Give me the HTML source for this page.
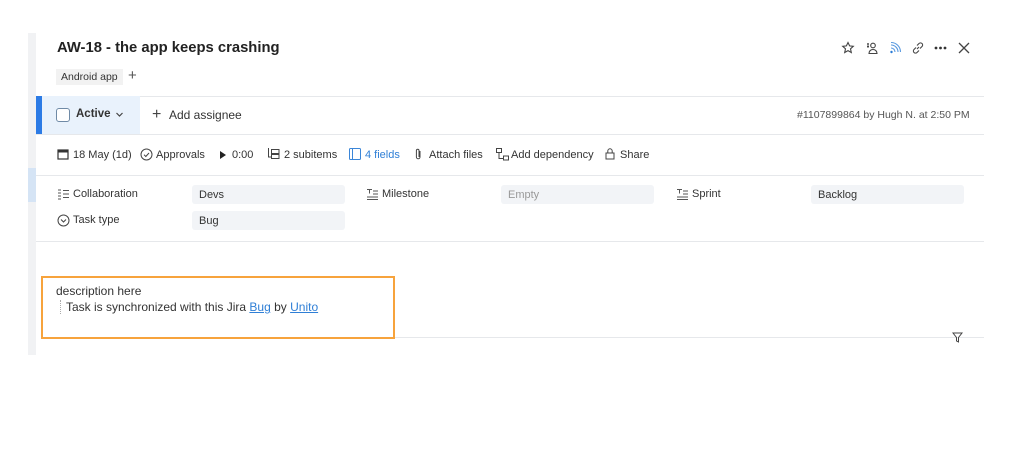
<!DOCTYPE html>
<html><head><meta charset="utf-8"><style>
body{margin:0;width:1024px;height:458px;background:#fff;font-family:"Liberation Sans",sans-serif;color:#333;position:relative;overflow:hidden}
.a{position:absolute;white-space:nowrap}
.ln{position:absolute;height:1px;background:#e6e8eb}
.pill{position:absolute;height:19px;background:#f2f4f7;border-radius:3px;font-size:11px;line-height:20px;padding-left:7px;box-sizing:border-box;color:#333}
.t{font-size:11px;color:#333}
svg{position:absolute}
</style></head><body>
<div class="a" style="left:28px;top:33px;width:8px;height:322px;background:#f1f2f4"></div>
<div class="a" style="left:28px;top:168px;width:8px;height:34px;background:#d5e4f5"></div>

<div class="a" style="left:57px;top:40px;font-size:14.8px;font-weight:bold;color:#222">AW-18 - the app keeps crashing</div>
<div class="a" style="left:56px;top:69px;height:16px;line-height:16px;padding:0 5px;background:#f2f2f2;font-size:10.5px;color:#333">Android app</div>
<div class="a" style="left:128px;top:67px;font-size:15px;color:#555">+</div>

<svg style="left:841px;top:41px" width="14" height="14" viewBox="0 0 14 14"><path d="M7 1.5l1.6 3.4 3.7.4-2.8 2.5.8 3.7L7 9.6l-3.3 1.9.8-3.7L1.7 5.3l3.7-.4z" fill="none" stroke="#444" stroke-width="1.1"/></svg>
<svg style="left:865px;top:41px" width="14" height="14" viewBox="0 0 14 14"><circle cx="8" cy="4.5" r="2.3" fill="none" stroke="#444" stroke-width="1.1"/><path d="M4 12.5c0-2.5 1.8-4 4-4s4 1.5 4 4z" fill="none" stroke="#444" stroke-width="1.1"/><path d="M2 3h2M2 5.5h2M3 2v5" stroke="#444" stroke-width="0.9"/></svg>
<svg style="left:888px;top:41px" width="14" height="14" viewBox="0 0 14 14"><circle cx="3.5" cy="11" r="1.2" fill="#2a7bd5"/><path d="M3 7a4 4 0 0 1 4 4M3 4a7 7 0 0 1 7 7M3 1.5a9.5 9.5 0 0 1 9.5 9.5" fill="none" stroke="#5a9ae0" stroke-width="1.1"/></svg>
<svg style="left:911px;top:41px" width="14" height="14" viewBox="0 0 14 14"><path d="M6 8l2-2M5 6.5l-2 2a2 2 0 0 0 3 3l2-2M9 7.5l2-2a2 2 0 0 0-3-3l-2 2" fill="none" stroke="#444" stroke-width="1.1"/></svg>
<svg style="left:934px;top:46px" width="13" height="4" viewBox="0 0 13 4"><circle cx="2" cy="2" r="1.4" fill="#333"/><circle cx="6.5" cy="2" r="1.4" fill="#333"/><circle cx="11" cy="2" r="1.4" fill="#333"/></svg>
<svg style="left:958px;top:42px" width="12" height="12" viewBox="0 0 12 12"><path d="M1 1l10 10M11 1L1 11" stroke="#444" stroke-width="1.3"/></svg>

<div class="ln" style="left:36px;top:96px;width:948px"></div>
<div class="a" style="left:36px;top:96px;width:104px;height:38px;background:#e9f2fc"></div>
<div class="a" style="left:36px;top:96px;width:6px;height:38px;background:#2c7be5"></div>
<div class="a" style="left:56px;top:108px;width:12px;height:12px;border:1.3px solid #6f8aa6;border-radius:3px;background:#fff"></div>
<div class="a" style="left:76px;top:108px;font-size:11.5px;font-weight:bold;color:#333">Active</div>
<svg style="left:115px;top:111px" width="9" height="7" viewBox="0 0 9 7"><path d="M1.5 2l3 3 3-3" fill="none" stroke="#444" stroke-width="1.2"/></svg>
<div class="a" style="left:152px;top:106px;font-size:16px;color:#444">+</div>
<div class="a" style="left:169px;top:108px;font-size:12px;color:#333">Add assignee</div>
<div class="a" style="left:797px;top:109px;font-size:10.5px;color:#555">#1107899864 by Hugh N. at 2:50 PM</div>
<div class="ln" style="left:36px;top:134px;width:948px"></div>

<svg style="left:57px;top:148px" width="12" height="12" viewBox="0 0 12 12"><rect x="1" y="2" width="10" height="9" fill="none" stroke="#333" stroke-width="1.2"/><rect x="1" y="2" width="10" height="2.5" fill="#333"/></svg>
<div class="a t" style="left:73px;top:149px">18 May (1d)</div>
<svg style="left:140px;top:148px" width="13" height="13" viewBox="0 0 13 13"><circle cx="6.5" cy="6.5" r="5.5" fill="none" stroke="#444" stroke-width="1"/><path d="M4 6.7l1.8 1.8L9 5" fill="none" stroke="#444" stroke-width="1"/></svg>
<div class="a t" style="left:156px;top:149px">Approvals</div>
<svg style="left:219px;top:151px" width="8" height="8" viewBox="0 0 8 8"><path d="M1 0l6 4-6 4z" fill="#222"/></svg>
<div class="a t" style="left:232px;top:149px">0:00</div>
<svg style="left:267px;top:148px" width="13" height="12" viewBox="0 0 13 12"><path d="M1.5 0v9h3" fill="none" stroke="#444"/><rect x="4.5" y="1.5" width="7.5" height="4" fill="none" stroke="#444"/><rect x="4.5" y="6.5" width="7.5" height="4" fill="none" stroke="#444"/></svg>
<div class="a t" style="left:284px;top:149px">2 subitems</div>
<svg style="left:349px;top:148px" width="12" height="12" viewBox="0 0 12 12"><rect x="0.5" y="0.5" width="11" height="11" rx="1" fill="none" stroke="#3b86d8"/><path d="M3.5 1v10" stroke="#3b86d8"/></svg>
<div class="a t" style="left:365px;top:149px;color:#2f7fd6">4 fields</div>
<svg style="left:414px;top:148px" width="9" height="13" viewBox="0 0 9 13"><path d="M6 3v6a1.8 1.8 0 0 1-3.6 0V2.5a1.3 1.3 0 0 1 2.6 0V9" fill="none" stroke="#444"/></svg>
<div class="a t" style="left:429px;top:149px">Attach files</div>
<svg style="left:496px;top:148px" width="13" height="13" viewBox="0 0 13 13"><rect x="0.5" y="0.5" width="5" height="4" fill="none" stroke="#444"/><rect x="7.5" y="8" width="5" height="4" fill="none" stroke="#444"/><path d="M3 4.5v6h4.5" fill="none" stroke="#444"/></svg>
<div class="a t" style="left:511px;top:149px">Add dependency</div>
<svg style="left:605px;top:147px" width="10" height="13" viewBox="0 0 10 13"><rect x="1" y="6" width="8" height="6" fill="none" stroke="#444"/><path d="M2.8 6V4a2.2 2.2 0 0 1 4.4 0v2" fill="none" stroke="#444"/></svg>
<div class="a t" style="left:620px;top:149px">Share</div>
<div class="ln" style="left:36px;top:175px;width:948px"></div>

<svg style="left:57px;top:188px" width="12" height="12" viewBox="0 0 12 12"><path d="M1 2h3M1 5h3M1 8h3M1 11h3M6 2.5h6M6 6h6M6 9.5h6" stroke="#555" stroke-width="1"/></svg>
<div class="a t" style="left:73px;top:188px">Collaboration</div>
<div class="pill" style="left:192px;top:185px;width:153px">Devs</div>
<svg style="left:366px;top:188px" width="12" height="12" viewBox="0 0 12 12"><path d="M1 1.5h5M3.5 1.5v4M7 3h5M7 6h5M1 9h11M1 11.5h11" stroke="#555" stroke-width="1"/></svg>
<div class="a t" style="left:382px;top:188px">Milestone</div>
<div class="pill" style="left:501px;top:185px;width:153px;color:#999">Empty</div>
<svg style="left:676px;top:188px" width="12" height="12" viewBox="0 0 12 12"><path d="M1 1.5h5M3.5 1.5v4M7 3h5M7 6h5M1 9h11M1 11.5h11" stroke="#555" stroke-width="1"/></svg>
<div class="a t" style="left:692px;top:188px">Sprint</div>
<div class="pill" style="left:811px;top:185px;width:153px">Backlog</div>
<svg style="left:57px;top:214px" width="13" height="13" viewBox="0 0 13 13"><circle cx="6.5" cy="6.5" r="5.5" fill="none" stroke="#444"/><path d="M4 5.5l2.5 2.5 2.5-2.5" fill="none" stroke="#444"/></svg>
<div class="a t" style="left:73px;top:214px">Task type</div>
<div class="pill" style="left:192px;top:211px;width:153px">Bug</div>
<div class="ln" style="left:36px;top:241px;width:948px"></div>

<div class="ln" style="left:394px;top:337px;width:590px"></div>
<svg style="left:952px;top:332px" width="11" height="11" viewBox="0 0 11 11"><path d="M1 1h9L6.5 5.5V10L4.5 9V5.5z" fill="none" stroke="#444"/></svg>
<div class="a" style="left:41px;top:276px;width:350px;height:59px;border:2px solid #f7a33c;background:#fff"></div>
<div class="a" style="left:56px;top:284px;font-size:12px;color:#333">description here</div>
<div class="a" style="left:60px;top:300px;width:2px;height:14px;border-left:1px dotted #aaa"></div>
<div class="a" style="left:66px;top:300px;font-size:12px;color:#333">Task is synchronized with this Jira <span style="color:#2f7fd6;text-decoration:underline">Bug</span> by <span style="color:#2f7fd6;text-decoration:underline">Unito</span></div>
</body></html>
